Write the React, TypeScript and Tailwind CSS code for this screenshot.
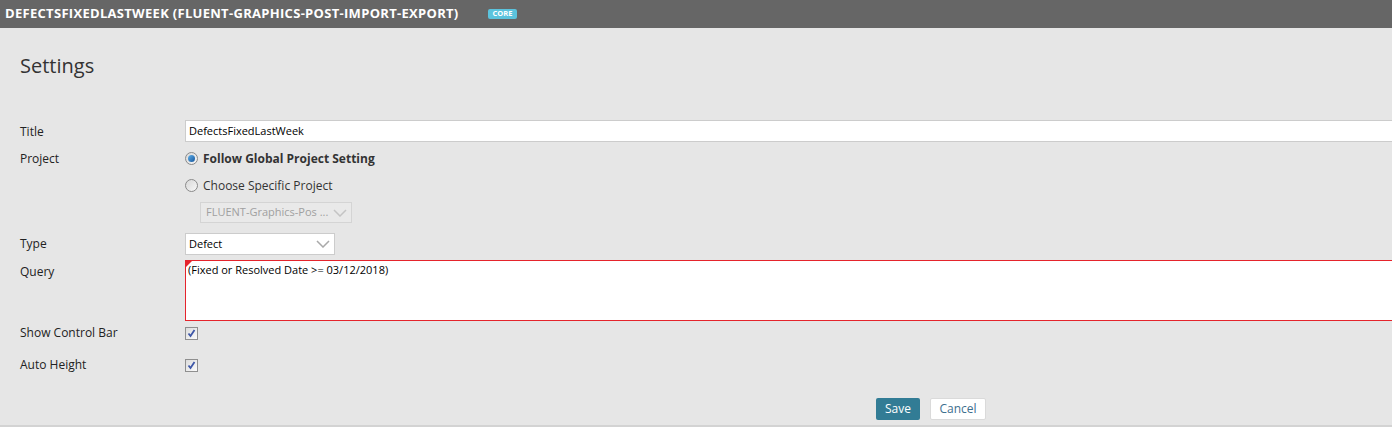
import React from 'react'

const font = { fontFamily: '"Open Sans", "Liberation Sans", sans-serif' }

function Chevron({ color = '#a9a9a9' }: { color?: string }) {
  return (
    <svg width="14" height="8" viewBox="0 0 14 8" fill="none">
      <polyline points="1,1 7,7 13,1" stroke={color} strokeWidth="1.5" />
    </svg>
  )
}

function Radio({ checked }: { checked?: boolean }) {
  return (
    <span className="flex h-[13px] w-[13px] shrink-0 items-center justify-center rounded-full border border-[#8a8a8a] bg-gradient-to-br from-[#d8d8d8] to-[#f7f7f7]">
      {checked && (
        <span className="h-[7px] w-[7px] rounded-full bg-gradient-to-br from-[#5fb0ea] to-[#16569c]" />
      )}
    </span>
  )
}

function Checkbox() {
  return (
    <span className="flex h-[13px] w-[13px] shrink-0 items-center justify-center border border-[#8f8f8f] bg-gradient-to-br from-[#dcdcdc] to-[#fbfbfb]">
      <svg width="9" height="9" viewBox="0 0 9 9" fill="none">
        <polyline points="1.5,4.5 3.5,7 7.5,1" stroke="#3e57a8" strokeWidth="1.8" />
      </svg>
    </span>
  )
}

export default function App() {
  return (
    <div className="w-[1392px] h-[445px] overflow-hidden bg-white text-[12px] text-[#222]" style={font}>
      {/* header */}
      <div className="flex h-[28px] items-center bg-[#666666] pl-[5px]">
        <span className="text-[13px] font-bold tracking-[0.3px] text-white">
          DEFECTSFIXEDLASTWEEK (FLUENT-GRAPHICS-POST-IMPORT-EXPORT)
        </span>
        <span className="ml-[29px] flex h-[10px] items-center rounded-[2px] bg-[#5bc3dd] px-[5px] text-[7.5px] font-bold leading-none text-white">
          CORE
        </span>
      </div>

      <div className="h-[399px] border-b-2 border-[#d3d3d3] bg-[#e6e6e6] pl-[20px]">
        <h1 className="pt-[24px] text-[20px] leading-[28px] text-[#333]">Settings</h1>

        <div className="mt-[40px]">
          {/* Title */}
          <div className="flex items-center">
            <div className="w-[165px] shrink-0 pt-[1px]">Title</div>
            <div className="h-[22px] w-[1240px] shrink-0 border border-[#cccccc] bg-white pl-[3px] text-[11px] leading-[20px] text-black">
              DefectsFixedLastWeek
            </div>
          </div>

          {/* Project */}
          <div className="mt-[3px] flex">
            <div className="w-[165px] shrink-0 leading-[27px]">Project</div>
            <div className="flex flex-col">
              <div className="flex h-[27px] items-center gap-[5px]">
                <Radio checked />
                <span className="font-bold text-[#333]">Follow Global Project Setting</span>
              </div>
              <div className="flex h-[27px] items-center gap-[5px]">
                <Radio />
                <span className="text-[#333]">Choose Specific Project</span>
              </div>
              <div className="ml-[15px] mt-[3px] flex h-[21px] w-[152px] items-center justify-between whitespace-nowrap border border-[#d4d4d4] bg-[#e9e9e9] pl-[5px] pr-[4px] text-[11px] text-[#a0a0a0]">
                <span>FLUENT-Graphics-Pos ...</span>
                <Chevron color="#c4c4c4" />
              </div>
            </div>
          </div>

          {/* Type */}
          <div className="mt-[10px] flex items-center">
            <div className="w-[165px] shrink-0">Type</div>
            <div className="flex h-[22px] w-[150px] items-center justify-between border border-[#cccccc] bg-white pl-[3px] pr-[4px] text-[11px] text-black">
              <span>Defect</span>
              <Chevron />
            </div>
          </div>

          {/* Query */}
          <div className="mt-[5px] flex">
            <div className="w-[165px] shrink-0 pt-[3px]">Query</div>
            <div className="relative h-[61px] w-[1240px] shrink-0 border border-[#e5242c] bg-white pl-[2px] pt-[1px] text-[11px] text-black">
              (Fixed or Resolved Date &gt;= 03/12/2018)
              <span className="absolute left-0 top-0 h-0 w-0 border-r-[6px] border-t-[6px] border-r-transparent border-t-[#e5242c]" />
            </div>
          </div>

          {/* Show Control Bar */}
          <div className="flex h-[24px] items-center">
            <div className="w-[165px] shrink-0">Show Control Bar</div>
            <Checkbox />
          </div>

          {/* Auto Height */}
          <div className="mt-[8px] flex h-[24px] items-center">
            <div className="w-[165px] shrink-0">Auto Height</div>
            <Checkbox />
          </div>

          {/* buttons */}
          <div className="mt-[21px] flex gap-[10px] pl-[856px]">
            <button className="h-[22px] w-[44px] rounded-[2px] bg-[#327c95] text-[12px] text-white">Save</button>
            <button className="h-[22px] w-[56px] rounded-[2px] border border-[#dadada] bg-white text-[12px] text-[#3d6f8e]">
              Cancel
            </button>
          </div>
        </div>
      </div>
    </div>
  )
}
